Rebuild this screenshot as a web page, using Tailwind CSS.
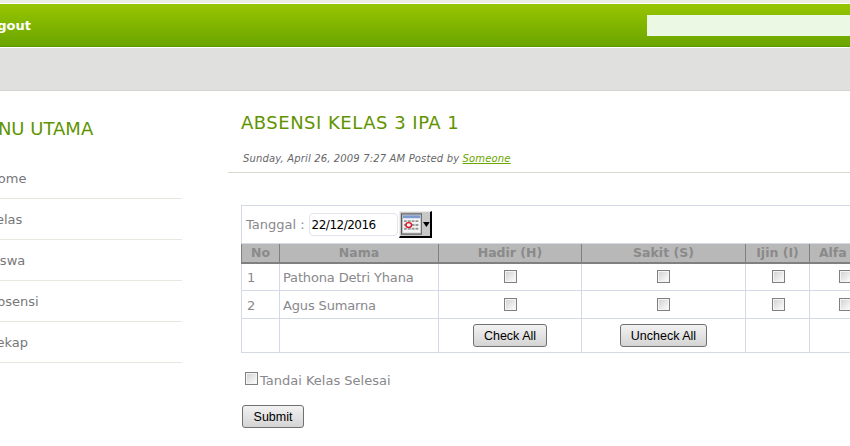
<!DOCTYPE html>
<html lang="en">
<head>
    <meta charset="UTF-8">
    <title>Absensi Kelas</title>
    <script src="https://cdn.jsdelivr.net/npm/@tailwindcss/browser@4"></script>
</head>
<body class="bg-white overflow-hidden h-[446px] w-[850px] font-['DejaVu_Sans','Liberation_Sans',sans-serif]">
    <!-- top bars -->
    <div class="h-[3px] bg-[#ecece2]"></div>
    <div class="h-[43px] mt-px bg-gradient-to-b from-[#97c500] to-[#6aa500] border-b border-[#5a9a00] flex items-center justify-between">
        <a class="text-white font-bold text-[13px] -ml-[20px] mt-px">Logout</a>
        <div class="w-[203px] h-[21px] bg-[#ebf8e4]"></div>
    </div>
    <div class="h-[43px] mt-px bg-[#e0e0de] border-b border-[#d3d3d1]"></div>

    <div class="flex -ml-[30px] w-[1000px]">
        <!-- sidebar -->
        <div class="w-[212px] shrink-0 pt-[27px]">
            <h2 class="text-[#5f9400] text-[18px] leading-[22px] h-[40px] pl-px whitespace-nowrap">MENU UTAMA</h2>
            <ul class="text-[13px] text-[#77777a]">
                <li class="h-[41px] border-b border-[#e8e8dc] pt-[13px] leading-4 pl-[18px]">Home</li>
                <li class="h-[41px] border-b border-[#e8e8dc] pt-[13px] leading-4 pl-[18px]">Kelas</li>
                <li class="h-[41px] border-b border-[#e8e8dc] pt-[13px] leading-4 pl-[18px]">Siswa</li>
                <li class="h-[41px] border-b border-[#e8e8dc] pt-[13px] leading-4 pl-[18px]">Absensi</li>
                <li class="h-[41px] border-b border-[#e8e8dc] pt-[13px] leading-4 pl-[18px]">Rekap</li>
            </ul>
        </div>

        <!-- content -->
        <div class="ml-[46px] w-[700px] shrink-0">
            <div class="border-b border-[#d8d8cc] h-[82px] pl-[13px] pt-[21px]">
                <h1 class="text-[#5f9400] text-[18px] tracking-[0.5px] leading-[22px] whitespace-nowrap">ABSENSI KELAS 3 IPA 1</h1>
                <p class="mt-[19px] ml-[2px] text-[10px] tracking-[0.15px] leading-[12px] italic text-[#66666a]">Sunday, April 26, 2009 7:27 AM Posted by <a class="underline text-[#6aa500]">Someone</a></p>
            </div>

            <div class="ml-[13px] mt-[32px]">
                <table class="table-fixed border-collapse w-[640px] text-[13px] text-[#88888c]">
                    <colgroup>
                        <col class="w-[38px]"><col class="w-[159px]"><col class="w-[143px]"><col class="w-[164px]"><col class="w-[64px]"><col class="w-[72px]">
                    </colgroup>
                    <tbody>
                        <tr class="h-[38px]">
                            <td colspan="6" class="border border-[#d5d9e6] px-1">
                                <div class="flex items-center">
                                    <span>Tanggal :</span>
                                    <input type="text" value="22/12/2016" class="ml-[4px] w-[89px] h-[23px] border border-[#e2e4ee] rounded-sm px-[2px] text-[12px] tracking-[-0.5px] text-black">
                                    <div class="ml-px w-[33px] h-[27px] bg-[#c8c8c8] border border-[#eee] border-r-black border-b-black border-r-2 border-b-2 flex items-center">
                                        <svg width="22" height="22" viewBox="0 0 22 22" class="ml-[1px]">
                                            <rect x="0.5" y="0.5" width="21" height="21" fill="#bdbdbd" stroke="#555"/>
                                            <rect x="2" y="2" width="18" height="18" fill="#f4f4f4"/>
                                            <rect x="2" y="2" width="18" height="3" fill="#7c9ad0"/>
                                            <path d="M3 7h3v2H3zM7 7h3v2H7zM11 7h3v2h-3zM15 7h3v2h-3zM3 11h3v2H3zM11 11h3v2h-3zM15 11h3v2h-3zM3 15h3v2H3zM7 15h3v2H7zM11 15h3v2h-3zM15 15h3v2h-3z" fill="#999"/>
                                            <ellipse cx="8" cy="12" rx="3" ry="2.5" fill="none" stroke="#e01020" stroke-width="1.4"/>
                                        </svg>
                                        <svg width="7" height="5" viewBox="0 0 7 5" class="ml-[1px]"><path d="M0 0h7L3.500 5z" fill="#000"/></svg>
                                    </div>
                                </div>
                            </td>
                        </tr>
                        <tr class="h-[19px] bg-[#b8b8b8] text-[#8a8a8a] text-[12.5px] border-b-2 border-[#808080] text-center leading-none">
                            <th class="border-x border-[#808080] font-bold">No</th>
                            <th class="border-x border-[#808080] font-bold">Nama</th>
                            <th class="border-x border-[#808080] font-bold">Hadir (H)</th>
                            <th class="border-x border-[#808080] font-bold">Sakit (S)</th>
                            <th class="border-x border-[#808080] font-bold whitespace-nowrap">Ijin (I)</th>
                            <th class="border-x border-[#808080] font-bold">Alfa (A)</th>
                        </tr>
                        <tr class="h-[28px]">
                            <td class="border border-[#d5d9e6] px-[5px] pt-[2px]">1</td>
                            <td class="border border-[#d5d9e6] px-[3px] pt-[2px] tracking-[-0.15px] whitespace-nowrap">Pathona Detri Yhana</td>
                            <td class="border border-[#d5d9e6] text-center"><input type="checkbox" class="appearance-none align-middle w-[13px] h-[13px] border border-[#808080] bg-gradient-to-br from-[#d0d0d0] to-white shadow-[inset_0_0_0_1px_#f4f4f4] -mt-[3px]"></td>
                            <td class="border border-[#d5d9e6] text-center"><input type="checkbox" class="appearance-none align-middle w-[13px] h-[13px] border border-[#808080] bg-gradient-to-br from-[#d0d0d0] to-white shadow-[inset_0_0_0_1px_#f4f4f4] -mt-[3px]"></td>
                            <td class="border border-[#d5d9e6] text-center pl-[2px]"><input type="checkbox" class="appearance-none align-middle w-[13px] h-[13px] border border-[#808080] bg-gradient-to-br from-[#d0d0d0] to-white shadow-[inset_0_0_0_1px_#f4f4f4] -mt-[3px]"></td>
                            <td class="border border-[#d5d9e6] text-center"><input type="checkbox" class="appearance-none align-middle w-[13px] h-[13px] border border-[#808080] bg-gradient-to-br from-[#d0d0d0] to-white shadow-[inset_0_0_0_1px_#f4f4f4] -mt-[3px]"></td>
                        </tr>
                        <tr class="h-[28px]">
                            <td class="border border-[#d5d9e6] px-[5px] pt-[2px]">2</td>
                            <td class="border border-[#d5d9e6] px-[3px] pt-[2px] tracking-[-0.15px] whitespace-nowrap">Agus Sumarna</td>
                            <td class="border border-[#d5d9e6] text-center"><input type="checkbox" class="appearance-none align-middle w-[13px] h-[13px] border border-[#808080] bg-gradient-to-br from-[#d0d0d0] to-white shadow-[inset_0_0_0_1px_#f4f4f4] -mt-[1px]"></td>
                            <td class="border border-[#d5d9e6] text-center"><input type="checkbox" class="appearance-none align-middle w-[13px] h-[13px] border border-[#808080] bg-gradient-to-br from-[#d0d0d0] to-white shadow-[inset_0_0_0_1px_#f4f4f4] -mt-[1px]"></td>
                            <td class="border border-[#d5d9e6] text-center pl-[2px]"><input type="checkbox" class="appearance-none align-middle w-[13px] h-[13px] border border-[#808080] bg-gradient-to-br from-[#d0d0d0] to-white shadow-[inset_0_0_0_1px_#f4f4f4] -mt-[1px]"></td>
                            <td class="border border-[#d5d9e6] text-center"><input type="checkbox" class="appearance-none align-middle w-[13px] h-[13px] border border-[#808080] bg-gradient-to-br from-[#d0d0d0] to-white shadow-[inset_0_0_0_1px_#f4f4f4] -mt-[1px]"></td>
                        </tr>
                        <tr class="h-[34px]">
                            <td class="border border-[#d5d9e6]"></td>
                            <td class="border border-[#d5d9e6]"></td>
                            <td class="border border-[#d5d9e6] text-center"><button class="w-[74px] h-[23px] pt-[2px] border border-[#707070] rounded-[3px] bg-gradient-to-b from-[#f2f2f2] to-[#d4d4d4] text-[12.5px] text-black font-['Liberation_Sans',sans-serif] align-middle">Check All</button></td>
                            <td class="border border-[#d5d9e6] text-center"><button class="w-[87px] h-[23px] pt-[2px] border border-[#707070] rounded-[3px] bg-gradient-to-b from-[#f2f2f2] to-[#d4d4d4] text-[12.5px] text-black font-['Liberation_Sans',sans-serif] align-middle">Uncheck All</button></td>
                            <td class="border border-[#d5d9e6]"></td>
                            <td class="border border-[#d5d9e6]"></td>
                        </tr>
                    </tbody>
                </table>

                <div class="mt-[19px] ml-[4px] flex items-center h-[16px] text-[13px] text-[#88888c]">
                    <input type="checkbox" class="appearance-none w-[13px] h-[13px] border border-[#808080] bg-gradient-to-br from-[#d0d0d0] to-white shadow-[inset_0_0_0_1px_#f4f4f4] -mt-[3px]">
                    <span class="ml-[2px] mt-px">Tandai Kelas Selesai</span>
                </div>
                <button class="block mt-[17px] ml-px w-[62px] h-[23px] pt-[2px] border border-[#707070] rounded-[3px] bg-gradient-to-b from-[#f2f2f2] to-[#d4d4d4] text-[12.5px] text-black font-['Liberation_Sans',sans-serif]">Submit</button>
            </div>
        </div>
    </div>
</body>
</html>
